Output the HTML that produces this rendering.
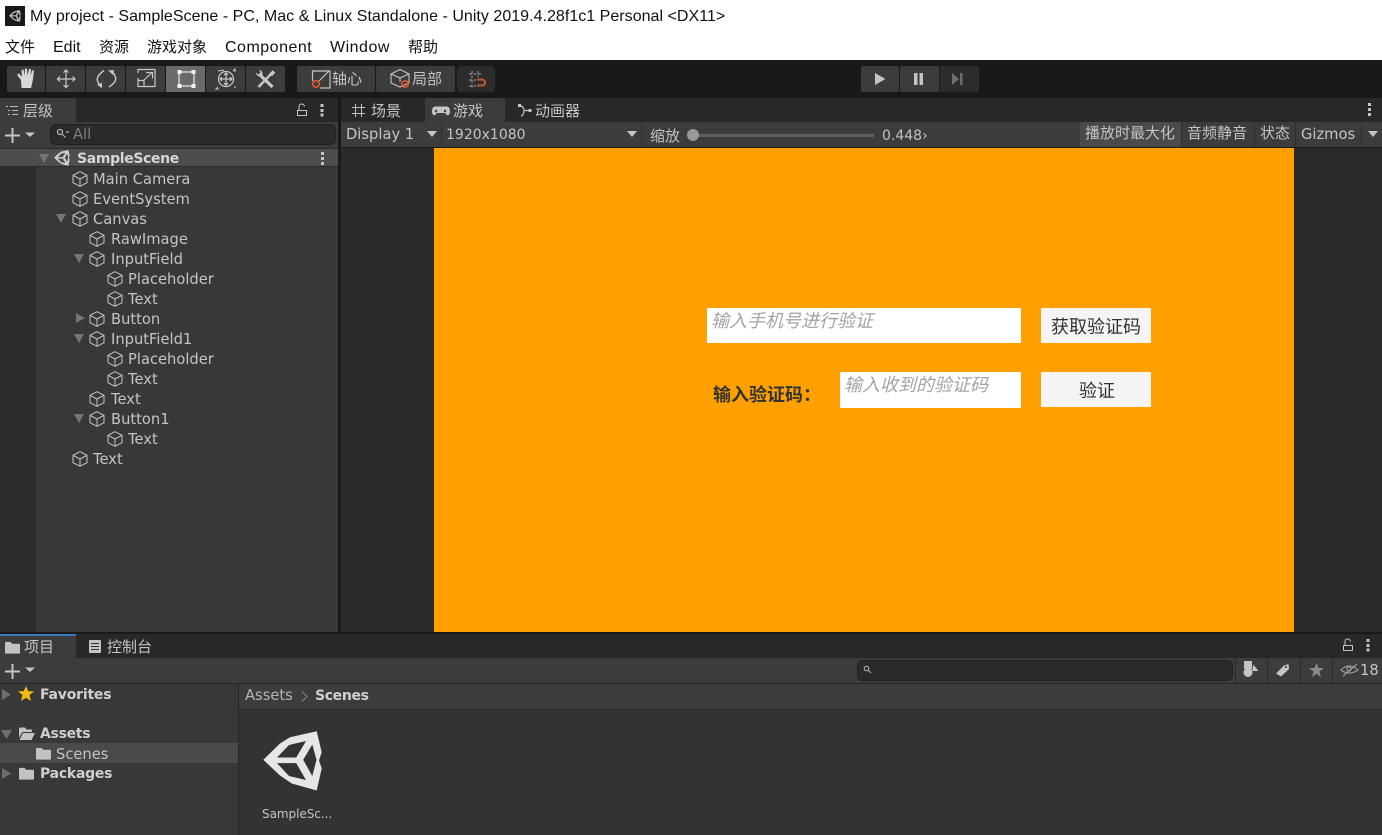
<!DOCTYPE html>
<html lang="zh"><head><meta charset="utf-8"><title>Unity</title>
<style>
html,body{margin:0;padding:0;width:1382px;height:835px;overflow:hidden;background:#282828}
body{position:relative;font-family:"DejaVu Sans","Noto Sans CJK SC",sans-serif;font-size:14px;color:#c4c4c4}
.r,.t,svg.a{position:absolute}
.r{display:block}
.t{white-space:nowrap;line-height:20px;height:20px}
.h{font-size:14.7px;margin-top:1px}
.c{font-family:"Noto Sans CJK SC",sans-serif;font-size:15px}
.m{color:#111;font-size:15px;line-height:20px}
.l{font-family:"Liberation Sans",sans-serif;font-size:16px}
.k{font-family:"Noto Sans CJK SC",sans-serif}
.b{background:#3c3c3c;border-radius:2px}
.w{font-weight:bold}
.ph{font-family:"Noto Sans CJK SC",sans-serif;font-style:italic;font-size:18px;color:#a3a3a3;line-height:24px;height:24px}
.bt{font-family:"Noto Sans CJK SC",sans-serif;font-size:18px;color:#323232;line-height:24px;height:24px}
svg.a{overflow:visible}
</style></head><body>
<svg width="0" height="0" style="position:absolute"><defs>
<symbol id="cube" viewBox="0 0 16 16"><path d="M8 .7 15 4.3V11.7L8 15.3 1 11.7V4.300ZM1 4.300 8 8 15 4.300M8 8V15.300" fill="none" stroke="#c4c4c4" stroke-width="1"/></symbol>
<symbol id="logo" viewBox="263 730.500 60 60"><path fill-rule="evenodd" d="M263.300 759.300 280 743 290 736.700 316.700 730.700 321.700 751.700 319 760 321.700 768 316.700 790 291.700 783 280 775ZM277 757H296.200L306 740.500 289 744.500ZM312.300 744 303.200 759.300 312.300 775.500 316.500 759.300ZM277 762.600 289 775.500 306 779.500 296.200 762.600Z"/></symbol>
<symbol id="folder" viewBox="0 0 16 13"><path d="M0 1.500Q0 .5 1 .5H6L7.500 2.500H15Q16 2.500 16 3.500V12Q16 13 15 13H1Q0 13 0 12Z" fill="#c2c2c2"/></symbol>
</defs></svg>

<!-- title bar -->
<div class="r" style="left:0;top:0;width:1382px;height:60px;background:#fff"></div>
<div class="r" style="left:5px;top:6px;width:20px;height:20px;background:#1a1a1a"></div>
<svg class="a" style="left:9px;top:10px;fill:#bdbdbd" width="12" height="12"><use href="#logo"/></svg>
<span class="t l" style="left:30px;top:7px;color:#111;letter-spacing:.03px">My project - SampleScene - PC, Mac &amp; Linux Standalone - Unity 2019.4.28f1c1 Personal &lt;DX11&gt;</span>
<span class="t m k" style="left:5px;top:37px">文件</span>
<span class="t m l" style="left:53px;top:38px;font-size:16px">Edit</span>
<span class="t m k" style="left:99px;top:37px">资源</span>
<span class="t m k" style="left:147px;top:37px">游戏对象</span>
<span class="t m l" style="left:225px;top:38px;font-size:16px;letter-spacing:.5px">Component</span>
<span class="t m l" style="left:330px;top:38px;font-size:16px;letter-spacing:.5px">Window</span>
<span class="t m k" style="left:408px;top:37px">帮助</span>

<!-- toolbar -->
<div class="r" style="left:0;top:60px;width:1382px;height:38px;background:#191919"></div>
<div class="r b" style="left:7px;top:66px;width:38px;height:26px"></div>
<div class="r b" style="left:46px;top:66px;width:39px;height:26px"></div>
<div class="r b" style="left:86px;top:66px;width:39px;height:26px"></div>
<div class="r b" style="left:126px;top:66px;width:39px;height:26px"></div>
<div class="r" style="left:166px;top:66px;width:39px;height:26px;background:#6a6a6a"></div>
<div class="r b" style="left:206px;top:66px;width:39px;height:26px"></div>
<div class="r b" style="left:246px;top:66px;width:39px;height:26px"></div>
<div class="r b" style="left:297px;top:66px;width:78px;height:26px"></div>
<div class="r b" style="left:376px;top:66px;width:79px;height:26px"></div>
<div class="r" style="left:457px;top:66px;width:38px;height:26px;background:#2c2c2c;border-radius:4px"></div>
<div class="r b" style="left:861px;top:66px;width:38px;height:26px"></div>
<div class="r b" style="left:900px;top:66px;width:39px;height:26px"></div>
<div class="r" style="left:940px;top:66px;width:39px;height:26px;background:#2c2c2c;border-radius:2px"></div>
<span class="t c" style="left:332px;top:69px">轴心</span>
<span class="t c" style="left:412px;top:69px">局部</span>

<!-- tool icons -->
<svg class="a" style="left:0;top:60px" width="300" height="40" fill="none" stroke="#c8c8c8" stroke-width="1.200">
<path d="M21 20 17.500 15.500V14L19 13.500 22 17 21.500 10 23.500 9.500 24.500 15.500 25 8.500H27L27.500 15.500 29 9H31L30.500 16 32 10.500H34L33 19 32 24 31 28H21.500Z" fill="#d8d8d8" stroke="none"/>
<path d="M66 10V27M57 19H75M63.500 12.500 66 10 68.500 12.500M63.500 25 66 27.500 68.500 25M60 16.500 57.500 19 60 21.500M72.500 16.500 75 19 72.500 21.500"/>
<path d="M104 10.500Q95 17 98 22 99 25 101 27M109 27Q118 21 115 16 114 13 111.500 11.500" stroke-width="1.400"/>
<path d="M97 24.700 102 28V22.700ZM108 10.300H114L113 15Z" fill="#c8c8c8" stroke="none"/>
<path d="M138 13V9.500H155V26.500H138V18M138 20.500H144V26.500M143 21 152 12.500M146 12.500H152.500V18.500"/>
<path d="M180 12H193M180 26H193M179 13V25M194 13V25" stroke="#e8e8e8"/>
<path d="M177.500 10h4v4h-4zM191.500 10h4v4h-4zM177.500 24h4v4h-4zM191.500 24h4v4h-4z" fill="#f2f2f2" stroke="none"/>
<circle cx="226" cy="19" r="7.500"/><path d="M226 13V25M220 19H232M224 15 226 13 228 15M224 23 226 25 228 23M222 17 220 19 222 21M230 17 232 19 230 21"/>
<path d="M218 11 224 10M233 11 235 9V12M218 27 216 29H219M234 27H236" stroke-width="1"/>
<path d="M260 15 272.500 27" stroke-width="3.200"/>
<path d="M256 12.500Q256.500 16.500 260 16.500 263 16 262.500 13 262 10.500 259 10L260.500 12.500 258.500 14.500Z" fill="#c8c8c8" stroke="none"/>
<path d="M271 14 258.500 27" stroke-width="2.400"/>
<path d="M270.500 15 274 11.500" stroke-width="3.600"/>
</svg>
<svg class="a" style="left:295px;top:60px" width="220" height="36" fill="none" stroke="#c4c4c4" stroke-width="1.200">
<path d="M17.500 21V11H35V28H25M24 21 34 11"/>
<circle cx="21" cy="24" r="3.200" stroke="#e0552a" stroke-width="1.700"/>
<path d="M105 9.500 114 14V23L105 27 96 23V14ZM96 14 105 18 114 14M105 18V22" stroke-width="1.100"/>
<circle cx="110" cy="24" r="3.200" stroke="#e0552a" stroke-width="1.700"/>
<path d="M174 14H187M174 20H181M174 26H181M177 11V28M183 11V17" stroke="#8a8a8a" stroke-dasharray="3 1.500"/>
<path d="M182 19.500H187Q190 20 190 22.500 190 25 187 25.500H182" stroke="#c05a2c" stroke-width="2"/>
</svg>
<svg class="a" style="left:861px;top:66px" width="120" height="26"><path d="M14 7 24.500 13 14 19Z" fill="#c4c4c4"/><path d="M53 7h3.500v12H53zM58.500 7H62v12h-3.500z" fill="#c4c4c4"/><path d="M91 7 98 13 91 19Z" fill="#6d6d6d"/><path d="M99 7h2.500v12H99z" fill="#6d6d6d"/></svg>

<!-- hierarchy -->
<div class="r" style="left:0;top:98px;width:338px;height:24px;background:#282828"></div>
<div class="r" style="left:0;top:98px;width:76px;height:24px;background:#3c3c3c;border-radius:0 3px 0 0"></div>
<svg class="a" style="left:5px;top:105px" width="14" height="12" fill="none" stroke="#b8b8b8"><path d="M1 1.500H3M5 1.500H13M3 5.500H5M7 5.500H13M3 9.500H5M7 9.500H13"/></svg>
<span class="t c" style="left:23px;top:101px">层级</span>
<svg class="a" style="left:296px;top:103px" width="30" height="16" fill="none" stroke="#c4c4c4"><path d="M1.500 7.500H10.500V12.500H1.500ZM3 7V3.500Q3 1 5.500 1 8 1 8.500 3.500"/><path d="M24.500 1h3v3h-3zM24.500 6h3v3h-3zM24.500 10.500h3v3h-3z" fill="#c4c4c4" stroke="none"/></svg>
<div class="r" style="left:0;top:122px;width:338px;height:26px;background:#3c3c3c"></div>
<svg class="a" style="left:5px;top:128px" width="32" height="16" fill="#c4c4c4"><path d="M6.500 0h2v15h-2z"/><path d="M0 6.500h15v2H0z"/><path d="M20 4.500H30L25 9Z"/></svg>
<div class="r" style="left:50px;top:124px;width:284px;height:19px;background:#2a2a2a;border:1px solid #212121;border-radius:6px"></div>
<svg class="a" style="left:56px;top:128px" width="14" height="12" fill="none" stroke="#b8b8b8" stroke-width="1.200"><circle cx="4" cy="4" r="2.500"/><path d="M6 6 9.500 9.500M10 4H13"/></svg>
<span class="t h" style="left:73px;top:124px;color:#7c7c7c">All</span>

<div class="r" style="left:0;top:148px;width:36px;height:484px;background:#2c2c2c"></div>
<div class="r" style="left:36px;top:148px;width:302px;height:484px;background:#383838"></div>
<div class="r" style="left:0;top:148px;width:338px;height:19px;background:#4d4d4d;border-top:1px solid #2b2b2b;border-bottom:1px solid #2b2b2b;box-sizing:border-box"></div>
<div class="r" style="left:338px;top:98px;width:3px;height:534px;background:#191919"></div>

<svg class="a" style="left:39px;top:153px" width="10" height="10"><path d="M0 1H10L5 10Z" fill="#757575"/></svg>
<svg class="a" style="left:54px;top:150px;fill:#d0d0d0" width="16" height="16"><use href="#logo"/></svg>
<span class="t w" style="left:77px;top:149px;color:#d6d6d6;letter-spacing:-.35px">SampleScene</span>
<svg class="a" style="left:321px;top:152px" width="4" height="13" fill="#c4c4c4"><rect y="0" width="3" height="3"/><rect y="5" width="3" height="3"/><rect y="10" width="3" height="3"/></svg>

<svg class="a" style="left:72px;top:171px" width="16" height="16"><use href="#cube"/></svg><span class="t h" style="left:93px;top:169px">Main Camera</span>
<svg class="a" style="left:72px;top:191px" width="16" height="16"><use href="#cube"/></svg><span class="t h" style="left:93px;top:189px">EventSystem</span>
<svg class="a" style="left:56px;top:214px" width="10" height="10"><path d="M0 0H10L5 9Z" fill="#757575"/></svg>
<svg class="a" style="left:72px;top:211px" width="16" height="16"><use href="#cube"/></svg><span class="t h" style="left:93px;top:209px">Canvas</span>
<svg class="a" style="left:89px;top:231px" width="16" height="16"><use href="#cube"/></svg><span class="t h" style="left:111px;top:229px">RawImage</span>
<svg class="a" style="left:74px;top:254px" width="10" height="10"><path d="M0 0H10L5 9Z" fill="#757575"/></svg>
<svg class="a" style="left:89px;top:251px" width="16" height="16"><use href="#cube"/></svg><span class="t h" style="left:111px;top:249px">InputField</span>
<svg class="a" style="left:107px;top:271px" width="16" height="16"><use href="#cube"/></svg><span class="t h" style="left:128px;top:269px">Placeholder</span>
<svg class="a" style="left:107px;top:291px" width="16" height="16"><use href="#cube"/></svg><span class="t h" style="left:128px;top:289px">Text</span>
<svg class="a" style="left:76px;top:313px" width="10" height="10"><path d="M0 0V10L9 5Z" fill="#757575"/></svg>
<svg class="a" style="left:89px;top:311px" width="16" height="16"><use href="#cube"/></svg><span class="t h" style="left:111px;top:309px">Button</span>
<svg class="a" style="left:74px;top:334px" width="10" height="10"><path d="M0 0H10L5 9Z" fill="#757575"/></svg>
<svg class="a" style="left:89px;top:331px" width="16" height="16"><use href="#cube"/></svg><span class="t h" style="left:111px;top:329px">InputField1</span>
<svg class="a" style="left:107px;top:351px" width="16" height="16"><use href="#cube"/></svg><span class="t h" style="left:128px;top:349px">Placeholder</span>
<svg class="a" style="left:107px;top:371px" width="16" height="16"><use href="#cube"/></svg><span class="t h" style="left:128px;top:369px">Text</span>
<svg class="a" style="left:89px;top:391px" width="16" height="16"><use href="#cube"/></svg><span class="t h" style="left:111px;top:389px">Text</span>
<svg class="a" style="left:74px;top:414px" width="10" height="10"><path d="M0 0H10L5 9Z" fill="#757575"/></svg>
<svg class="a" style="left:89px;top:411px" width="16" height="16"><use href="#cube"/></svg><span class="t h" style="left:111px;top:409px">Button1</span>
<svg class="a" style="left:107px;top:431px" width="16" height="16"><use href="#cube"/></svg><span class="t h" style="left:128px;top:429px">Text</span>
<svg class="a" style="left:72px;top:451px" width="16" height="16"><use href="#cube"/></svg><span class="t h" style="left:93px;top:449px">Text</span>

<!-- game view -->
<div class="r" style="left:341px;top:98px;width:1041px;height:24px;background:#282828"></div>
<div class="r" style="left:425px;top:98px;width:80px;height:24px;background:#3c3c3c;border-radius:3px 3px 0 0"></div>
<svg class="a" style="left:352px;top:104px" width="13" height="13" fill="none" stroke="#c4c4c4"><path d="M3.500 0V13M9.500 0V13M0 3.500H13M0 9.500H13"/></svg>
<span class="t c" style="left:371px;top:101px">场景</span>
<svg class="a" style="left:432px;top:106px" width="18" height="10"><path d="M3 .5H15Q18 1 18 5 18 9 15.500 9.500L13 7H5L2.500 9.500Q0 9 0 5 0 1 3 .5Z" fill="#c4c4c4"/><path d="M4 3.500V6.500M2.500 5H5.500" stroke="#333"/><circle cx="13" cy="5" r="1.200" fill="#333"/></svg>
<span class="t c" style="left:453px;top:101px">游戏</span>
<svg class="a" style="left:518px;top:104px" width="14" height="13" fill="none" stroke="#c4c4c4" stroke-width="1.200"><path d="M1 1.500Q6 2 6 6.500 6 11 3 12M6 6.500H13"/><rect x="0" y="0" width="3" height="3" fill="#c4c4c4" stroke="none"/><rect x="10.500" y="5" width="3" height="3" fill="#c4c4c4" stroke="none"/></svg>
<span class="t c" style="left:535px;top:101px">动画器</span>
<svg class="a" style="left:1368px;top:103px" width="4" height="13" fill="#c4c4c4"><rect width="3" height="3"/><rect y="5" width="3" height="3"/><rect y="10" width="3" height="3"/></svg>

<div class="r" style="left:341px;top:122px;width:1041px;height:26px;background:#3c3c3c"></div>
<div class="r" style="left:441px;top:122px;width:1px;height:26px;background:#303030"></div>
<div class="r" style="left:641px;top:122px;width:1px;height:26px;background:#303030"></div>
<span class="t h" style="left:346px;top:124px">Display 1</span>
<svg class="a" style="left:427px;top:131px" width="10" height="7"><path d="M0 0H10L5 6Z" fill="#c4c4c4"/></svg>
<span class="t" style="left:446px;top:125px">1920x1080</span>
<svg class="a" style="left:627px;top:131px" width="10" height="7"><path d="M0 0H10L5 6Z" fill="#c4c4c4"/></svg>
<span class="t c" style="left:650px;top:126px">缩放</span>
<div class="r" style="left:692px;top:134px;width:182px;height:3px;background:#5e5e5e"></div>
<div class="r" style="left:687px;top:129px;width:12px;height:12px;border-radius:50%;background:#999"></div>
<span class="t" style="left:882px;top:126px">0.448›</span>
<div class="r" style="left:1080px;top:122px;width:101px;height:26px;background:#4a4a4a"></div>
<div class="r" style="left:1181px;top:122px;width:1px;height:26px;background:#2e2e2e"></div>
<div class="r" style="left:1254px;top:122px;width:1px;height:26px;background:#2e2e2e"></div>
<div class="r" style="left:1295px;top:122px;width:1px;height:26px;background:#2e2e2e"></div>
<div class="r" style="left:1361px;top:126px;width:1px;height:18px;background:#2e2e2e"></div>
<span class="t c" style="left:1085px;top:123px">播放时最大化</span>
<span class="t c" style="left:1187px;top:123px">音频静音</span>
<span class="t c" style="left:1260px;top:123px">状态</span>
<span class="t h" style="left:1301px;top:124px">Gizmos</span>
<svg class="a" style="left:1368px;top:131px" width="10" height="7"><path d="M0 0H10L5 6Z" fill="#c4c4c4"/></svg>

<div class="r" style="left:341px;top:148px;width:1041px;height:484px;background:#2a2a2a"></div>
<div class="r" style="left:341px;top:147px;width:1041px;height:1px;background:#1c1c1c"></div>
<div class="r" style="left:434px;top:148px;width:860px;height:484px;background:#ffa000"></div>

<div class="r" style="left:707px;top:308px;width:314px;height:35px;background:#fff;border-radius:1px"></div>
<span class="t ph" style="left:711px;top:308px">输入手机号进行验证</span>
<div class="r" style="left:1041px;top:308px;width:110px;height:35px;background:#f4f4f4;border-radius:1px"></div>
<span class="t bt" style="left:1051px;top:314px">获取验证码</span>
<span class="t bt" style="left:713px;top:382px;font-weight:bold">输入验证码：</span>
<div class="r" style="left:840px;top:372px;width:181px;height:36px;background:#fff;border-radius:1px"></div>
<span class="t ph" style="left:844px;top:372px">输入收到的验证码</span>
<div class="r" style="left:1041px;top:372px;width:110px;height:35px;background:#f4f4f4;border-radius:1px"></div>
<span class="t bt" style="left:1079px;top:378px">验证</span>

<!-- bottom -->
<div class="r" style="left:0;top:632px;width:1382px;height:2px;background:#191919"></div>
<div class="r" style="left:0;top:634px;width:1382px;height:24px;background:#282828"></div>
<div class="r" style="left:0;top:634px;width:76px;height:24px;background:#3c3c3c;border-top:2px solid #3a79bb;box-sizing:border-box"></div>
<svg class="a" style="left:5px;top:641px" width="15" height="13"><use href="#folder"/></svg>
<span class="t c" style="left:24px;top:637px">项目</span>
<svg class="a" style="left:89px;top:640px" width="12" height="13"><rect width="12" height="13" rx="1" fill="#c4c4c4"/><path d="M2 3.500H10M2 6.500H10M2 9.500H10" stroke="#333"/></svg>
<span class="t c" style="left:107px;top:637px">控制台</span>
<svg class="a" style="left:1342px;top:639px" width="30" height="16" fill="none" stroke="#c4c4c4"><path d="M1.500 6.500H10.500V11.500H1.500ZM3 6V2.500Q3 0 5.500 0 8 0 8.500 2.500"/><path d="M24.500 0h3v3h-3zM24.500 5h3v3h-3zM24.500 9.500h3v3h-3z" fill="#c4c4c4" stroke="none"/></svg>

<div class="r" style="left:0;top:658px;width:1382px;height:26px;background:#3c3c3c"></div>
<svg class="a" style="left:5px;top:664px" width="32" height="16" fill="#c4c4c4"><path d="M6.500 0h2v15h-2z"/><path d="M0 6.500h15v2H0z"/><path d="M20 3.500H30L25 8Z"/></svg>
<div class="r" style="left:857px;top:660px;width:374px;height:19px;background:#2a2a2a;border:1px solid #212121;border-radius:6px"></div>
<svg class="a" style="left:863px;top:665px" width="12" height="10" fill="none" stroke="#b8b8b8"><circle cx="3.500" cy="3.500" r="2.300"/><path d="M5 5 8 8"/></svg>
<div class="r" style="left:1235px;top:658px;width:1px;height:26px;background:#2c2c2c"></div>
<div class="r" style="left:1267px;top:658px;width:1px;height:26px;background:#2c2c2c"></div>
<div class="r" style="left:1300px;top:658px;width:1px;height:26px;background:#2c2c2c"></div>
<div class="r" style="left:1332px;top:658px;width:1px;height:26px;background:#2c2c2c"></div>
<svg class="a" style="left:1243px;top:661px" width="90" height="20" fill="#c4c4c4">
<rect x="1" y="0" width="8" height="8"/><circle cx="5" cy="11.500" r="4.500"/><path d="M10.500 3.500 15.500 10H9Z"/>
<path d="M33 12.500 41 4.500 45.500 3 46 8 38 15.500Z"/><circle cx="43" cy="6" r="1" fill="#3c3c3c"/>
<path d="M73.500 2 75.500 7H81L76.500 10.500 78 16 73.500 12.800 69 16 70.500 10.500 66 7H71.500Z" fill="#8a8a8a"/>
</svg>
<svg class="a" style="left:1340px;top:661px" width="20" height="18" fill="none" stroke="#9a9a9a" stroke-width="1.200"><path d="M1 9Q9 1 18 9 9 15 1 9Z"/><path d="M3 15 17 3"/><circle cx="9" cy="8" r="2"/></svg>
<span class="t h" style="left:1360px;top:660px">18</span>

<div class="r" style="left:0;top:683px;width:1382px;height:1px;background:#262626"></div>
<div class="r" style="left:0;top:684px;width:238px;height:151px;background:#383838"></div>
<div class="r" style="left:238px;top:684px;width:1px;height:151px;background:#242424"></div>
<div class="r" style="left:239px;top:684px;width:1143px;height:25px;background:#3c3c3c"></div>
<div class="r" style="left:239px;top:709px;width:1143px;height:1px;background:#2b2b2b"></div>
<div class="r" style="left:239px;top:710px;width:1143px;height:125px;background:#333"></div>
<div class="r" style="left:0;top:743px;width:238px;height:20px;background:#4a4a4a"></div>

<svg class="a" style="left:2px;top:689px" width="10" height="11"><path d="M0 0V11L9 5.500Z" fill="#6e6e6e"/></svg>
<svg class="a" style="left:18px;top:686px" width="16" height="15"><path d="M8 0 10.300 5.300H16L11.500 9 13 15 8 11.700 3 15 4.500 9 0 5.300H5.700Z" fill="#f4b915"/></svg>
<span class="t w" style="left:40px;top:685px;color:#cfcfcf;letter-spacing:-.2px">Favorites</span>
<svg class="a" style="left:1px;top:730px" width="11" height="10"><path d="M0 0H11L5.500 9Z" fill="#6e6e6e"/></svg>
<svg class="a" style="left:19px;top:727px" width="16" height="13"><path d="M0 2Q0 .5 1 .5H6L7.500 2.500H13V5H3.500L0 11Z" fill="#c2c2c2"/><path d="M4 6H16L12.500 13H.5Z" fill="#c2c2c2"/></svg>
<span class="t w" style="left:40px;top:724px;color:#cfcfcf;letter-spacing:-.3px">Assets</span>
<svg class="a" style="left:36px;top:747px" width="15" height="13"><use href="#folder"/></svg>
<span class="t h" style="left:56px;top:744px">Scenes</span>
<svg class="a" style="left:2px;top:768px" width="10" height="11"><path d="M0 0V11L9 5.500Z" fill="#6e6e6e"/></svg>
<svg class="a" style="left:19px;top:767px" width="15" height="13"><use href="#folder"/></svg>
<span class="t w" style="left:40px;top:764px;color:#cfcfcf;letter-spacing:-.25px">Packages</span>

<span class="t h" style="left:245px;top:685px;color:#b4b4b4">Assets</span>
<svg class="a" style="left:301px;top:691px" width="8" height="11" fill="none" stroke="#7a7a7a" stroke-width="1.300"><path d="M1 .5 6 5.500 1 10.500"/></svg>
<span class="t w" style="left:315px;top:686px;color:#cfcfcf;letter-spacing:-.35px">Scenes</span>
<svg class="a" style="left:263px;top:730.500px;fill:#e6e6e6" width="60" height="60"><use href="#logo"/></svg>
<span class="t" style="left:262px;top:804px;font-size:12px;color:#c4c4c4;letter-spacing:-.05px">SampleSc...</span>
</body></html>
